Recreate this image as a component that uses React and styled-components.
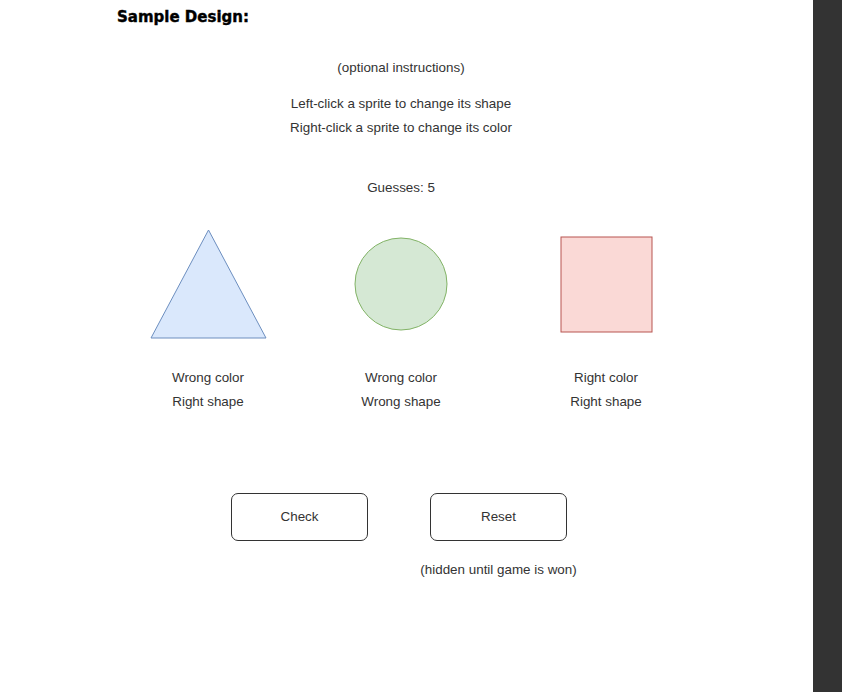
import styled, { createGlobalStyle } from "styled-components";

const GlobalStyle = createGlobalStyle`
  html, body {
    margin: 0;
    padding: 0;
    background: #ffffff;
  }
  body {
    font-family: "Liberation Sans", Arial, sans-serif;
  }
`;

const Page = styled.div`
  display: flex;
  width: 842px;
  height: 692px;
  overflow: hidden;
`;

const Main = styled.main`
  flex: 1;
  background: #ffffff;
  display: flex;
  flex-direction: column;
`;

const Sidebar = styled.aside`
  width: 29px;
  background: #333333;
`;

const Title = styled.h1`
  margin: 7px 0 0 117px;
  font-family: "DejaVu Sans", sans-serif;
  font-weight: 700;
  font-size: 15px;
  line-height: 20px;
  color: #000;
  -webkit-text-stroke: 0.4px #000;
`;

const Content = styled.div`
  width: 802px;
  text-align: center;
  color: #333333;
  font-size: 13.4px;
  line-height: 24px;
`;

const Line = styled.p`
  margin: ${(p) => p.$top || 0}px 0 0;
`;

const Shapes = styled.div`
  display: grid;
  grid-template-columns: 200px 186px 224px;
  padding-left: 108px;
  margin-top: ${(p) => p.$top}px;
  height: ${(p) => p.$height || "auto"};
  align-items: center;
  justify-items: center;
`;

const Label = styled.div`
  line-height: 24px;
`;

const Buttons = styled.div`
  display: flex;
  justify-content: center;
  align-items: flex-start;
  gap: 62px;
  margin-top: 79px;
  padding-right: 4px;
`;

const ButtonGroup = styled.div`
  width: 137px;
  display: flex;
  flex-direction: column;
  align-items: center;
`;

const Button = styled.button`
  width: 137px;
  height: 48px;
  border: 1px solid #333;
  border-radius: 7px;
  background: #fff;
  font-family: "Liberation Sans", Arial, sans-serif;
  font-size: 13.4px;
  color: #333;
  padding: 0 0 2px;
  margin-bottom: 17px;
`;

const Note = styled.div`
  line-height: 24px;
  white-space: nowrap;
`;

const Triangle = () => (
  <svg width="117" height="110" viewBox="0 0 117 110">
    <polygon points="58.5,1 1,109 116,109" fill="#dae8fc" stroke="#6c8ebf" strokeWidth="1" />
  </svg>
);

const Circle = () => (
  <svg width="94" height="98" viewBox="0 0 94 98">
    <circle cx="47" cy="49" r="46" fill="#d5e8d4" stroke="#82b366" strokeWidth="1" />
  </svg>
);

const Square = () => (
  <svg width="93" height="97" viewBox="0 0 93 97">
    <rect x="1" y="1" width="91" height="95" fill="#fad9d6" stroke="#b85450" strokeWidth="1" />
  </svg>
);

const App = () => {
  return (
    <>
      <GlobalStyle />
      <Page>
        <Main>
          <Title>Sample Design:</Title>
          <Content>
            <Line $top={29}>(optional instructions)</Line>
            <Line $top={12}>
              Left-click a sprite to change its shape
              <br />
              Right-click a sprite to change its color
            </Line>
            <Line $top={36}>Guesses: 5</Line>
            <Shapes $top={29} $height="110px">
              <Triangle />
              <Circle />
              <Square />
            </Shapes>
            <Shapes $top={27}>
              <Label>
                Wrong color
                <br />
                Right shape
              </Label>
              <Label>
                Wrong color
                <br />
                Wrong shape
              </Label>
              <Label>
                Right color
                <br />
                Right shape
              </Label>
            </Shapes>
            <Buttons>
              <ButtonGroup>
                <Button>Check</Button>
              </ButtonGroup>
              <ButtonGroup>
                <Button>Reset</Button>
                <Note>(hidden until game is won)</Note>
              </ButtonGroup>
            </Buttons>
          </Content>
        </Main>
        <Sidebar />
      </Page>
    </>
  );
};

export default App;
